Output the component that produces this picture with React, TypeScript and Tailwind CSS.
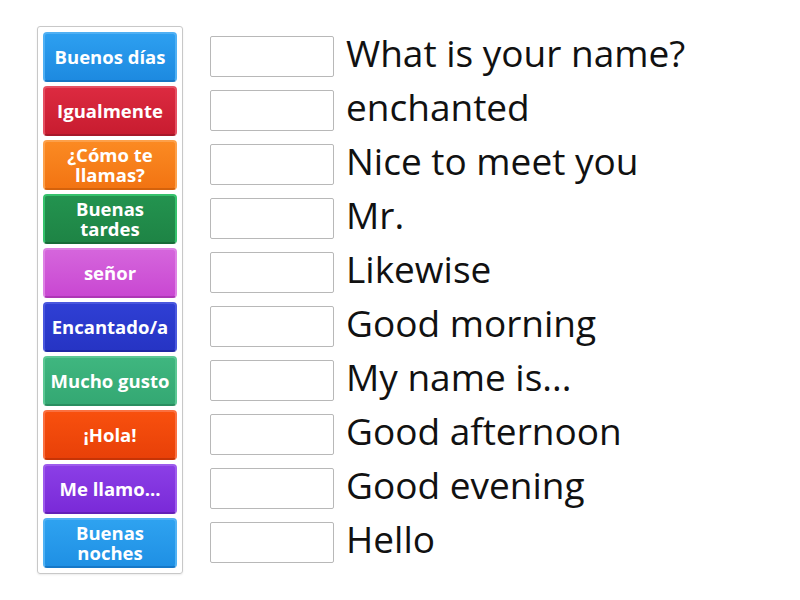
const tiles = [
  { label: "Buenos días", c: "bg-gradient-to-b from-[#2d9ff0] to-[#1d8ae0] border-[#4fb0f4] border-b-[#1676c4]" },
  { label: "Igualmente", c: "bg-gradient-to-b from-[#dc2a40] to-[#c81c30] border-[#e55062] border-b-[#a8182a]" },
  { label: "¿Cómo te llamas?", c: "bg-gradient-to-b from-[#fb8a22] to-[#f27412] border-[#fca04a] border-b-[#d4620c]" },
  { label: "Buenas tardes", c: "bg-gradient-to-b from-[#23934f] to-[#1e8445] border-[#36c26c] border-b-[#186c38]" },
  { label: "señor", c: "bg-gradient-to-b from-[#d565dc] to-[#c947d2] border-[#de82e4] border-b-[#ae36b6]" },
  { label: "Encantado/a", c: "bg-gradient-to-b from-[#2f3fd4] to-[#2634c4] border-[#4a58de] border-b-[#1e28a4]" },
  { label: "Mucho gusto", c: "bg-gradient-to-b from-[#3fb67f] to-[#34a873] border-[#5cc894] border-b-[#2a8e60]" },
  { label: "¡Hola!", c: "bg-gradient-to-b from-[#f8500e] to-[#e84008] border-[#fa7040] border-b-[#c63406]" },
  { label: "Me llamo...", c: "bg-gradient-to-b from-[#8b3ee6] to-[#7a2ad8] border-[#9e5cec] border-b-[#6420b8]" },
  { label: "Buenas noches", c: "bg-gradient-to-b from-[#2ea2f0] to-[#1f90e4] border-[#50b2f4] border-b-[#1678c8]" },
]

const answers = [
  "What is your name?",
  "enchanted",
  "Nice to meet you",
  "Mr.",
  "Likewise",
  "Good morning",
  "My name is...",
  "Good afternoon",
  "Good evening",
  "Hello",
]

export default function App() {
  return (
    <div className="w-[800px] h-[600px] bg-white font-['Open_Sans',sans-serif] flex items-start pl-[37px] pt-[26px]">
      <div className="w-[146px] border border-[#c8c8c8] rounded-[3px] p-[5px] flex flex-col gap-[4px] shadow-[0_1px_2px_rgba(0,0,0,0.08)]">
        {tiles.map((t) => (
          <div key={t.label}
            className={`h-[50px] rounded-[4px] border-2 flex items-center justify-center text-center text-white font-bold text-[18.5px] leading-[20px] px-[2px] overflow-hidden ${t.c}`}>
            {t.label}
          </div>
        ))}
      </div>
      <div className="ml-[27px] pt-[10px] flex flex-col gap-[13px]">
        {answers.map((a) => (
          <div key={a} className="flex items-center h-[41px]">
            <div className="w-[124px] h-[41px] border border-[#b8b8b8] rounded-[2px] bg-white" />
            <span className="ml-[12px] pb-[9px] text-[37px] leading-none text-[#111] whitespace-nowrap">{a}</span>
          </div>
        ))}
      </div>
    </div>
  )
}
